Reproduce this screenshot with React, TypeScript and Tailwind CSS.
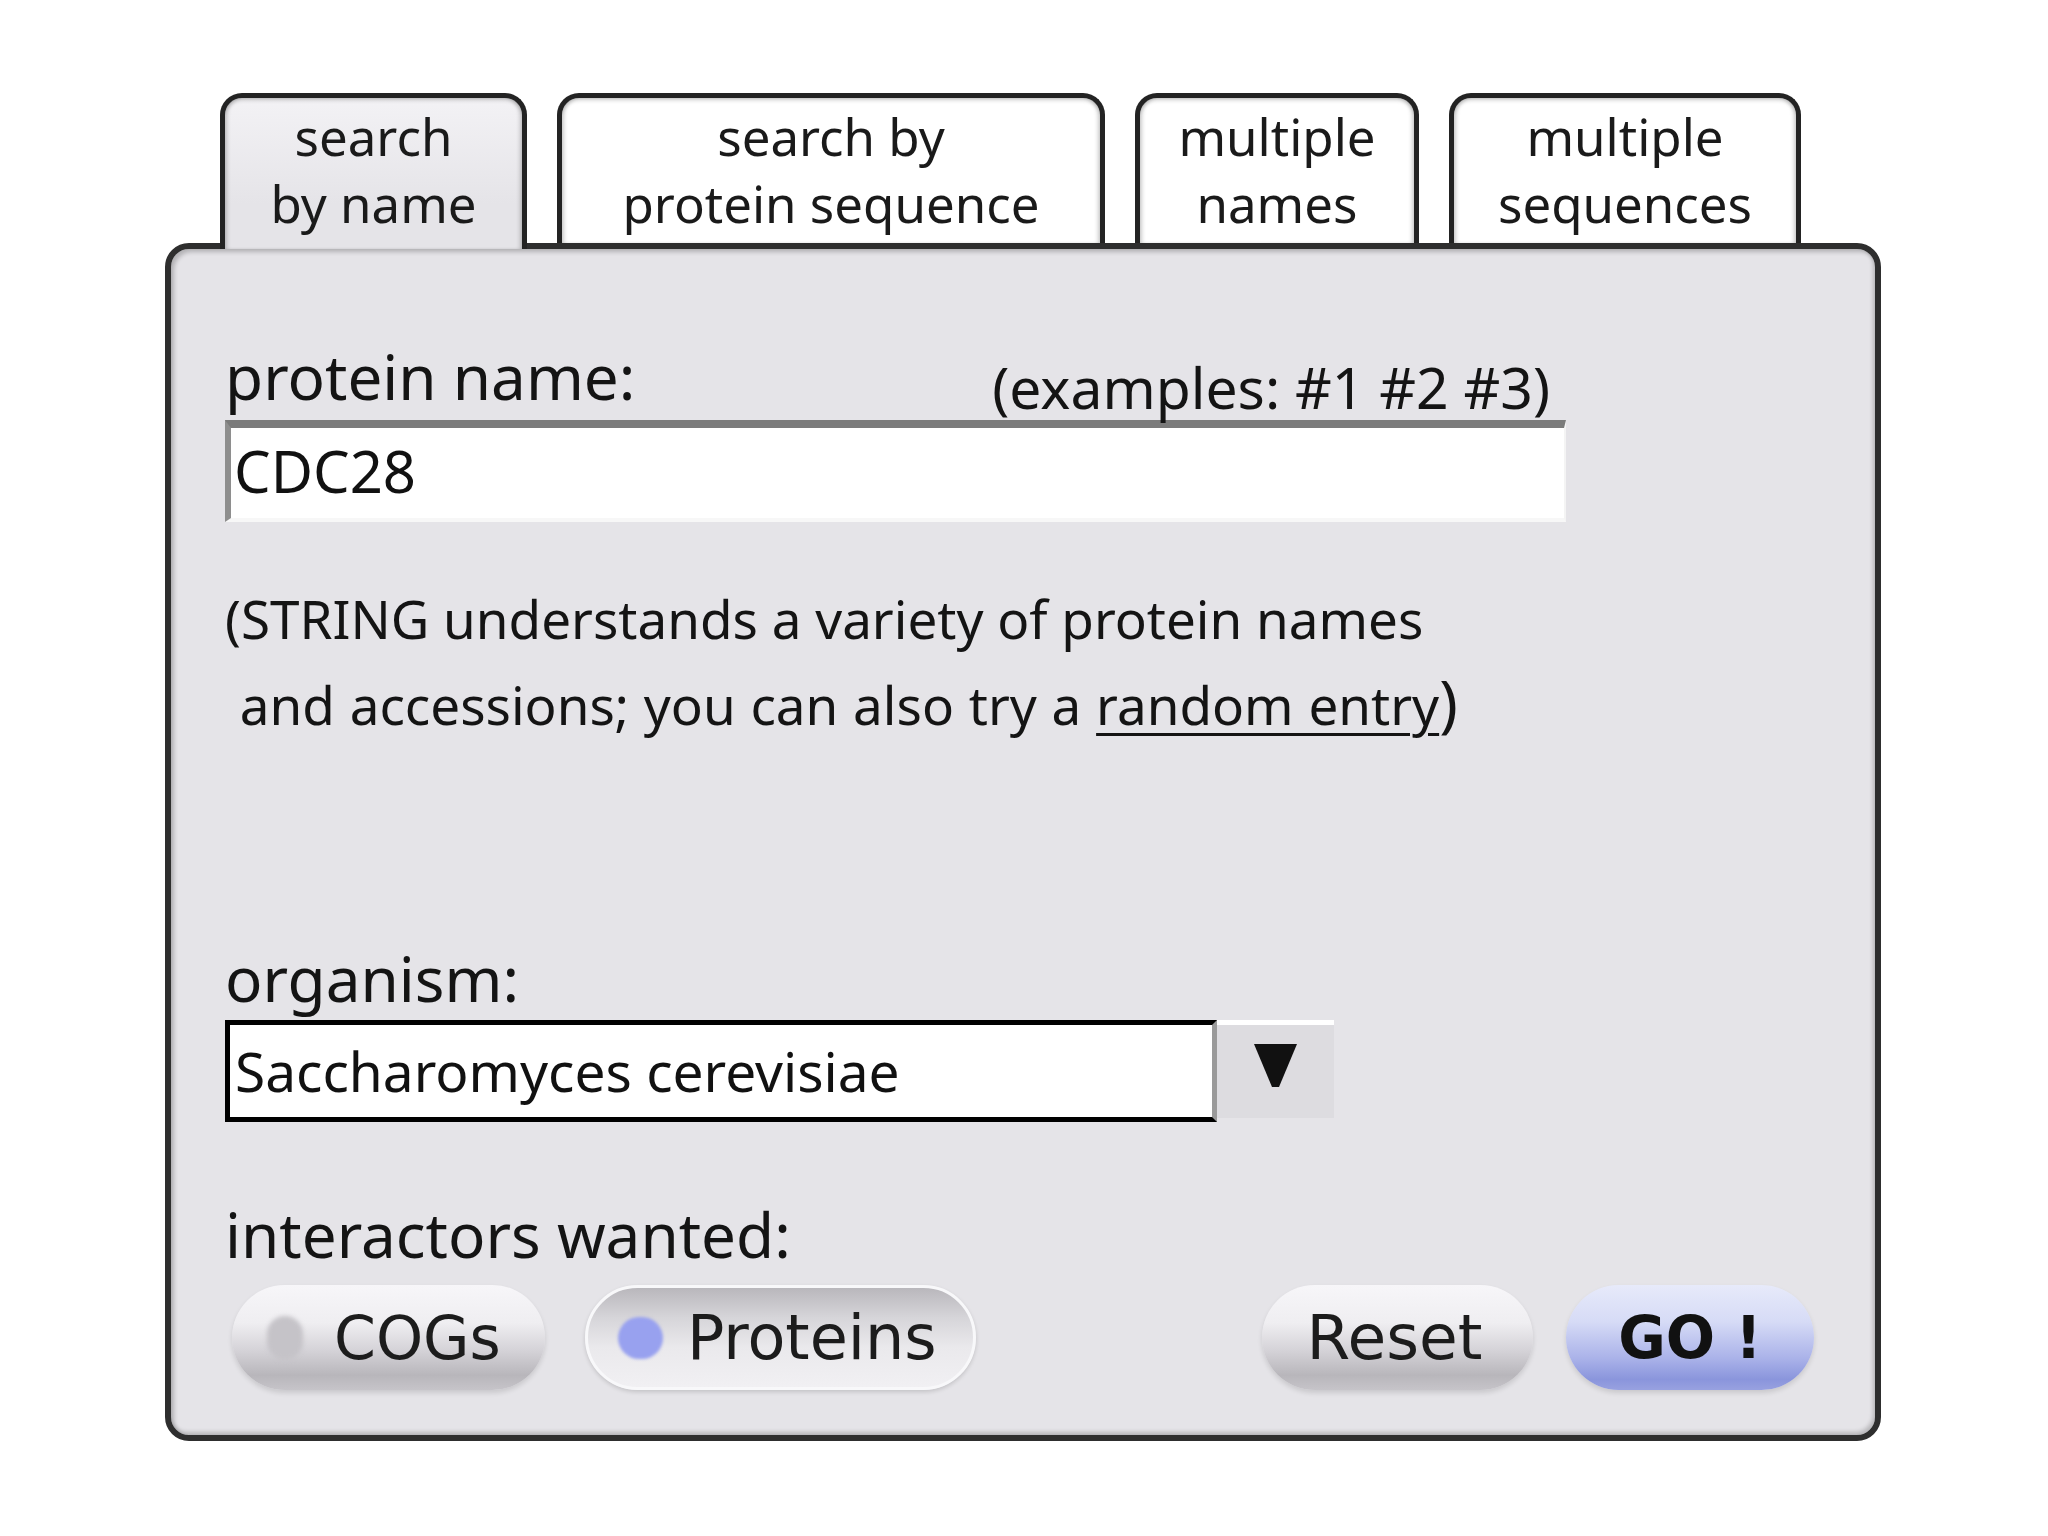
export default function App() {
  const tabBase =
    "border-[5px] border-b-0 border-[#232323] rounded-t-[22px] pt-[5px] text-center text-[51px] leading-[67px] text-[#1a1a1a] shadow-[inset_4px_0_4px_-2px_rgba(0,0,0,0.2),inset_-4px_0_4px_-2px_rgba(0,0,0,0.2),inset_0_4px_4px_-2px_rgba(0,0,0,0.2)]";
  const pill =
    "h-[105px] rounded-full flex items-center font-['DejaVu_Sans',sans-serif] text-[60px] leading-[60px] text-[#1c1c1c]";
  const grayGrad =
    "bg-[linear-gradient(to_bottom,#f7f6f9_0%,#efeef1_36%,#d5d3d8_62%,#b8b6bb_86%,#c6c4c9_100%)] shadow-[0_3px_5px_rgba(0,0,0,0.12)]";
  return (
    <div className="w-[2048px] h-[1536px] bg-white font-['Noto_Sans',sans-serif] text-[#141414] pt-[93px] pl-[165px]">
      <div className="w-[1716px]">
        {/* tabs */}
        <div className="relative z-10 flex items-start gap-[30px] pl-[55px] -mb-[6px]">
          <div className={`${tabBase} w-[307px] h-[156px] bg-[linear-gradient(to_bottom,#f3f2f5,#e5e4e8_70%)]`}>
            <div>search</div>
            <div>by name</div>
          </div>
          <div className={`${tabBase} w-[548px] h-[150px] bg-white`}>
            <div>search by</div>
            <div>protein sequence</div>
          </div>
          <div className={`${tabBase} w-[284px] h-[150px] bg-white`}>
            <div>multiple</div>
            <div>names</div>
          </div>
          <div className={`${tabBase} w-[352px] h-[150px] bg-white`}>
            <div>multiple</div>
            <div>sequences</div>
          </div>
        </div>

        {/* panel */}
        <div className="h-[1198px] rounded-[24px] border-[6px] border-[#2e2e2e] bg-[#e5e4e8] shadow-[inset_3px_3px_4px_rgba(0,0,0,0.22),inset_-2px_-3px_4px_rgba(0,0,0,0.2)] pl-[54px] pr-[61px] pt-[91px]">
          <div className="flex w-[1341px] items-start justify-between pr-[16px]">
            <span className="text-[62px] leading-[72px]">protein name:</span>
            <span className="text-[57px] leading-[72px] translate-y-[11px]">(examples: #1 #2 #3)</span>
          </div>

          <div className="mt-[8px] w-[1341px] h-[102px] bg-white border-t-[8px] border-t-[#7b7b7b] border-l-[6px] border-l-[#8e8e8e] border-r-[2px] border-r-[#f4f4f4] border-b-[4px] border-b-[#f7f7f7] pl-[3px] pt-[11px] text-[58px] leading-[64px] text-[#111]">
            CDC28
          </div>

          <div className="mt-[56px] text-[53px] leading-[82px]">
            <div>(STRING understands a variety of protein names</div>
            <div className="[word-spacing:1px]">
              {"\u00a0"}and accessions; you can also try a{" "}
              <span className="underline decoration-[3px] underline-offset-[8px]">random entry</span>
              <span className="text-[62px]">)</span>
            </div>
          </div>

          <div className="mt-[196px] text-[62px] leading-[72px]">organism:</div>

          <div className="mt-[6px] flex">
            <div className="w-[992px] h-[102px] bg-white border-y-[5px] border-l-[5px] border-black border-r-[5px] border-r-[#9a9a9a] pl-[5px] pt-[14px] text-[55px] leading-[64px] text-[#111]">
              Saccharomyces cerevisiae
            </div>
            <div className="w-[117px] h-[98px] bg-[#dddce0] border-t-[5px] border-t-white flex justify-center pt-[18px]">
              <svg width="45" height="45" viewBox="0 0 45 45" className="blur-[0.6px]">
                <polygon points="1,1 44,1 26,44 19,44" fill="#111" />
              </svg>
            </div>
          </div>

          <div className="mt-[76px] text-[62px] leading-[72px]">interactors wanted:</div>

          <div className="mt-[15px] flex items-center pl-[7px]">
            <div className={`${pill} ${grayGrad} w-[313px] pl-[35px]`}>
              <div className="w-[36px] h-[44px] rounded-full bg-[#c5c3c8] blur-[2px]" />
              <span className="ml-[31px]">COGs</span>
            </div>
            <div className={`${pill} ml-[40px] w-[391px] border-[3px] border-[#f8f8fa] bg-[linear-gradient(to_bottom,#b9b7bc_0%,#d6d5d9_30%,#eae9ec_60%,#f1f0f3_100%)] shadow-[0_2px_4px_rgba(0,0,0,0.15)] pl-[30px]`}>
              <div className="w-[45px] h-[42px] rounded-full bg-[#98a1ef] blur-[1.5px]" />
              <span className="ml-[24px] text-[62px]">Proteins</span>
            </div>
            <div className={`${pill} ${grayGrad} ml-auto w-[271px] justify-center`}>
              <span className="text-[63px] -translate-x-[3px]">Reset</span>
            </div>
            <div className={`${pill} ml-[33px] w-[248px] justify-center bg-[linear-gradient(to_bottom,#e7eafa_0%,#d6dbf6_35%,#aab2e9_70%,#8a95dc_90%,#98a1e0_100%)] shadow-[0_3px_5px_rgba(0,0,0,0.12)]`}>
              <span className="font-bold text-[58px] text-[#111]">GO !</span>
            </div>
          </div>
        </div>
      </div>
    </div>
  );
}
